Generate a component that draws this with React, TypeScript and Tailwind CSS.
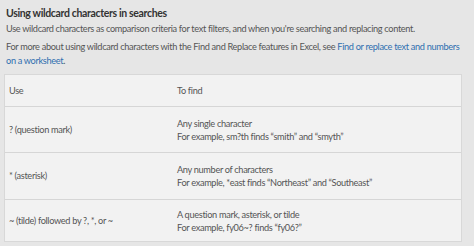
const rows = [
  {
    use: "? (question mark)",
    find: "Any single character",
    example: "For example, sm?th finds \u201csmith\u201d and \u201csmyth\u201d",
    h: "h-[46px]",
  },
  {
    use: "* (asterisk)",
    find: "Any number of characters",
    example: "For example, *east finds \u201cNortheast\u201d and \u201cSoutheast\u201d",
    h: "h-[47px]",
  },
  {
    use: "~ (tilde) followed by ?, *, or ~",
    find: "A question mark, asterisk, or tilde",
    example: "For example, fy06~? finds \u201cfy06?\u201d",
    h: "h-[41px]",
  },
];

export default function App() {
  return (
    <div className="w-[474px] h-[246px] overflow-hidden bg-[#e6e6e6] text-[#555] font-['Lato',sans-serif] text-[9.2px] tracking-[-0.33px] leading-[14px]">
      <div className="pl-[6px] pr-3 pt-[5px] whitespace-nowrap">
        <h2 className="text-[10.5px] tracking-[-0.35px] leading-[17px] font-bold text-[#333]">
          Using wildcard characters in searches
        </h2>
        <p>
          Use wildcard characters as comparison criteria for text filters, and when you're searching and replacing content.
        </p>
        <p className="mt-[4px]">
          For more about using wildcard characters with the Find and Replace features in Excel, see{" "}
          <span className="text-[#2f6fb0]">Find or replace text and numbers</span>
        </p>
        <p>
          <span className="text-[#2f6fb0]">on a worksheet</span>.
        </p>
      </div>

      <div className="ml-[4px] mt-[6px] w-[458px] border border-[#d8d8d8] bg-[#f2f2f2] whitespace-nowrap">
        <div className="grid grid-cols-[172px_1fr] h-[32px] items-center border-b border-[#d6d6d6]">
          <div className="pl-[4px]">Use</div>
          <div>To find</div>
        </div>
        {rows.map((row, i) => (
          <div
            key={i}
            className={
              "grid grid-cols-[172px_1fr] items-center " +
              row.h +
              (i < rows.length - 1 ? " border-b border-[#d6d6d6]" : "")
            }
          >
            <div className="pl-[4px]">{row.use}</div>
            <div className="leading-[13px]">
              <div>{row.find}</div>
              <div>{row.example}</div>
            </div>
          </div>
        ))}
      </div>
    </div>
  );
}
